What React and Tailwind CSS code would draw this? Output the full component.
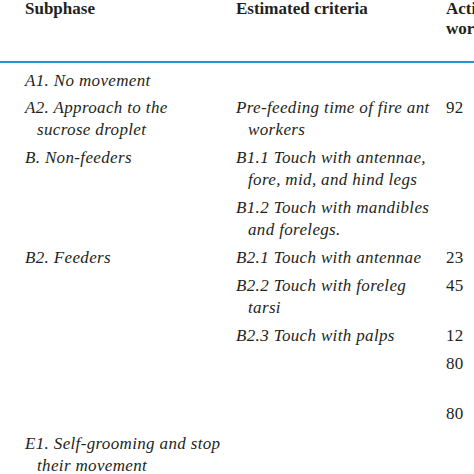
const rows = [
  { a: ["A1. No movement"], b: [], c: "", first: true },
  { a: ["A2. Approach to the", "sucrose droplet"], b: ["Pre-feeding time of fire ant", "workers"], c: "92" },
  { a: ["B. Non-feeders"], b: ["B1.1 Touch with antennae,", "fore, mid, and hind legs"], c: "" },
  { a: [], b: ["B1.2 Touch with mandibles", "and forelegs."], c: "" },
  { a: ["B2. Feeders"], b: ["B2.1 Touch with antennae"], c: "23" },
  { a: [], b: ["B2.2 Touch with foreleg", "tarsi"], c: "45" },
  { a: [], b: ["B2.3 Touch with palps"], c: "12" },
  { a: [], b: [], c: "80", tall: true },
  { a: [], b: [], c: "80" },
  { a: ["E1. Self-grooming and stop", "their movement"], b: [], c: "", last: true },
];

function Cell({ lines }) {
  return (
    <div className="italic">
      {lines.map((l, i) => (
        <div key={i} className={i > 0 ? "pl-[12px] whitespace-nowrap" : "whitespace-nowrap"}>
          {l}
        </div>
      ))}
    </div>
  );
}

export default function App() {
  return (
    <div className="w-[474px] h-[474px] overflow-hidden bg-white text-[#231f20] text-[17px] font-['Liberation_Serif','Times_New_Roman',serif]">
      <div className="grid grid-cols-[211px_210px_1fr] pl-[25px] pt-[2px] pb-[25px] font-bold leading-[14px]">
        <div>Subphase</div>
        <div className="whitespace-nowrap">Estimated criteria</div>
        <div className="whitespace-nowrap">
          <div className="mb-[6px]">Active</div>
          <div>workers</div>
        </div>
      </div>
      <div className="h-[2px] bg-[#1f97d7]" />
      <div className="mt-[5px] leading-[22px] tracking-[0.35px]">
        {rows.map((r, i) => (
          <div
            key={i}
            className={
              "grid grid-cols-[211px_210px_1fr] pl-[25px] " +
              (r.first ? "py-[2px]" : r.last ? "pt-[5px]" : "py-[3px]")
            }
          >
            <Cell lines={r.a.length ? r.a : ["\u00a0"]} />
            <Cell lines={r.b} />
            <div className={r.tall ? "h-[44px]" : ""}>{r.c}</div>
          </div>
        ))}
      </div>
    </div>
  );
}
